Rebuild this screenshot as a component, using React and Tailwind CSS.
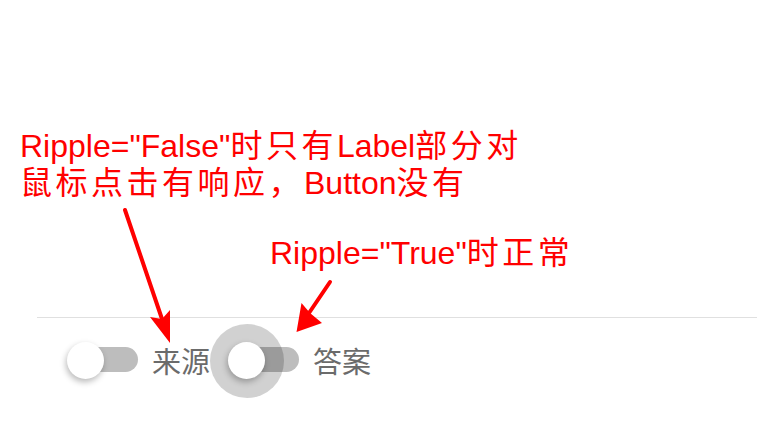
import React from 'react';

const cjk = "font-['Noto_Sans_CJK_SC',sans-serif] text-[32px] leading-none tracking-[3.5px]";

function Switch({ ripple }) {
  return (
    <div className="relative w-[71px] h-[38px] shrink-0">
      <div className="absolute left-[10px] right-0 top-[6px] h-[25px] rounded-full bg-[#bdbdbd]" />
      {ripple && (
        <div className="absolute left-[-18px] top-[-17px] w-[74px] h-[74px] rounded-full bg-black/[0.18]" />
      )}
      <div className="absolute left-0 top-[1px] w-[37px] h-[37px] rounded-full bg-white shadow-[-1px_3px_6px_rgba(0,0,0,0.28)]" />
    </div>
  );
}

export default function App() {
  return (
    <div className="relative w-[757px] h-[432px] overflow-hidden bg-white font-['Liberation_Sans',Arial,sans-serif] text-[#ff0000]">
      {/* 注释文字 */}
      <div className="pt-[127px] pl-[20px] text-[32px]">
        <div className="h-[37px] leading-[37px] whitespace-nowrap">
          Ripple="False"<span className={cjk}>时只有</span>Label<span className={cjk}>部分对</span>
        </div>
        <div className="h-[37px] leading-[37px] whitespace-nowrap">
          <span className={cjk}>鼠标点击有响应，</span>Button<span className={cjk}>没有</span>
        </div>
      </div>
      <div className="mt-[33px] pl-[270px] text-[32px] h-[37px] leading-[37px] whitespace-nowrap">
        Ripple="True"<span className={cjk}>时正常</span>
      </div>

      {/* 分割线 */}
      <div className="mt-[46px] ml-[37px] h-px bg-[#e0e0e0]" />

      {/* 开关 */}
      <div className="mt-[23px] pl-[67px] flex items-center h-[38px]">
        <Switch />
        <span className="ml-[14px] text-[29px] leading-none text-[#6b6b6b] font-['Noto_Sans_CJK_SC',sans-serif]">来源</span>
        <div className="ml-[18px]">
          <Switch ripple />
        </div>
        <span className="relative ml-[14px] text-[29px] leading-none text-[#6b6b6b] font-['Noto_Sans_CJK_SC',sans-serif]">答案</span>
      </div>

      {/* 箭头 */}
      <svg className="absolute inset-0 pointer-events-none" width="757" height="432" viewBox="0 0 757 432">
        <line x1="125" y1="210" x2="162" y2="319" stroke="#ff0000" strokeWidth="4" strokeLinecap="round" />
        <polygon points="170,343 150,317 162,319 170,310" fill="#ff0000" />
        <line x1="330" y1="282" x2="309" y2="313" stroke="#ff0000" strokeWidth="4" strokeLinecap="round" />
        <polygon points="296.5,332 301.5,303 310,313 322,323" fill="#ff0000" />
      </svg>
    </div>
  );
}
